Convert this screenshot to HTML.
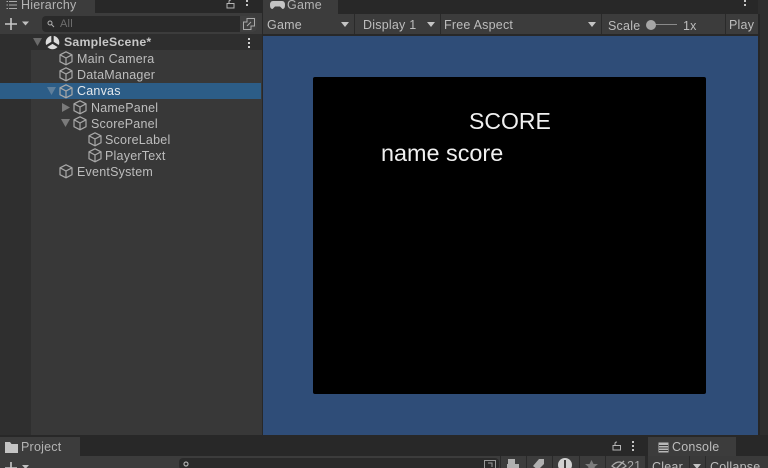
<!DOCTYPE html>
<html><head><meta charset="utf-8">
<style>
html,body{margin:0;padding:0;width:768px;height:468px;overflow:hidden;background:#232323}
body{position:relative;font-family:"Liberation Sans",sans-serif;color:#c4c4c4;font-size:12.5px;filter:blur(.3px)}
.a{position:absolute}
.t{position:absolute;white-space:nowrap;line-height:16px;letter-spacing:.22px;color:#bdbdbd}
svg{position:absolute;overflow:visible}
</style></head><body>
<svg width="0" height="0" style="position:absolute"><defs>
<g id="cube" fill="none" stroke="#a8a8a8" stroke-width="1.200" stroke-linejoin="round"><path d="M7 .8 L13 3.800 V10.700 L7 13.800 L1 10.700 V3.800 Z"/><path d="M1 3.800 L7 7 L13 3.800 M7 7 V13.800"/></g>
</defs></svg>

<!-- Hierarchy panel -->
<div class="a" style="left:0;top:0;width:262px;height:435px;background:#383838"></div>
<div class="a" style="left:0;top:35px;width:31px;height:400px;background:#2f2f2f"></div>
<div class="a" style="left:0;top:0;width:262px;height:13px;background:#282828"></div>
<div class="a" style="left:0;top:0;width:95px;height:13px;background:#3c3c3c"></div>
<svg style="left:6px;top:0" width="12" height="12"><path d="M3 1.500H11M3 5H11M3 8.500H11" stroke="#aaa" stroke-width="1"/><path d="M0.5 1.500H2M0.500 5H2M0.500 8.500H2" stroke="#aaa"/></svg>
<div class="t" style="left:21px;top:-3px;color:#b4b4b4">Hierarchy</div>
<svg style="left:226px;top:0" width="10" height="10"><path d="M1 3.500H8V8H1Z M3 3.500V1.500Q3 0 5 0" fill="none" stroke="#b5b5b5" stroke-width="1"/></svg>
<div class="a" style="left:246px;top:0;width:2px;height:2px;background:#c4c4c4;box-shadow:0 4px #c4c4c4"></div>
<div class="a" style="left:0;top:13px;width:262px;height:21px;background:#3c3c3c"></div>
<svg style="left:5px;top:17px" width="24" height="14"><path d="M6 1V13M0 7H12" stroke="#c8c8c8" stroke-width="1.600"/><path d="M17 4.500H24L20.500 8.500Z" fill="#c0c0c0"/></svg>
<div class="a" style="left:42px;top:16px;width:215px;height:16px;background:#2a2a2a;border-radius:4px"></div>
<div class="a" style="left:240px;top:16px;width:17px;height:16px;background:#404040;border-radius:0 4px 4px 0"></div>
<svg style="left:47px;top:20px" width="9" height="9"><circle cx="3" cy="3" r="2" fill="none" stroke="#b0b0b0" stroke-width="1"/><path d="M4.500 4.500L7 7" stroke="#b0b0b0"/></svg>
<div class="t" style="left:60px;top:16px;font-size:11px;color:#6f6f6f">All</div>
<svg style="left:243px;top:18px" width="12" height="12"><path d="M4 .5H11.500V8H8V11.500H.5V4H4Z" fill="none" stroke="#aaa"/><path d="M4 8L8 4" stroke="#aaa"/></svg>

<div class="a" style="left:0;top:34px;width:262px;height:16px;background:#2e2e2e"></div>
<svg style="left:33px;top:38px" width="9" height="8"><path d="M0 0H9L4.500 8Z" fill="#6a6a6a"/></svg>
<svg style="left:45px;top:35px" width="15" height="15"><circle cx="7.500" cy="7.500" r="6.800" fill="#dcdcdc"/><path d="M7.500 0V7.500M7.500 7.500L1 11.500M7.500 7.500L14 11.500" stroke="#2e2e2e" stroke-width="2.400"/></svg>
<div class="t" style="left:64px;top:34px;font-weight:bold;font-size:12.300px;color:#c6c6c6">SampleScene*</div>
<div class="a" style="left:248px;top:38px;width:2px;height:2px;background:#d0d0d0;box-shadow:0 4px #d0d0d0,0 8px #d0d0d0"></div>

<div class="a" style="left:0;top:83px;width:261px;height:16px;background:#2c5d87"></div>

<svg style="left:59px;top:51px" width="14" height="15"><use href="#cube"/></svg>
<div class="t" style="left:77px;top:51px">Main Camera</div>
<svg style="left:59px;top:67px" width="14" height="15"><use href="#cube"/></svg>
<div class="t" style="left:77px;top:67px">DataManager</div>
<svg style="left:47px;top:87px" width="9" height="8"><path d="M0 0H9L4.500 8Z" fill="#5f7f9b"/></svg>
<svg style="left:59px;top:84px" width="14" height="15"><use href="#cube"/></svg>
<div class="t" style="left:77px;top:83px;color:#e4e8ec">Canvas</div>
<svg style="left:62px;top:103px" width="8" height="9"><path d="M0 0L8 4.500L0 9Z" fill="#7a7a7a"/></svg>
<svg style="left:73px;top:100px" width="14" height="15"><use href="#cube"/></svg>
<div class="t" style="left:91px;top:99.600px">NamePanel</div>
<svg style="left:61px;top:119px" width="9" height="8"><path d="M0 0H9L4.500 8Z" fill="#7a7a7a"/></svg>
<svg style="left:73px;top:116px" width="14" height="15"><use href="#cube"/></svg>
<div class="t" style="left:91px;top:116px">ScorePanel</div>
<svg style="left:88px;top:132px" width="14" height="15"><use href="#cube"/></svg>
<div class="t" style="left:105px;top:132px">ScoreLabel</div>
<svg style="left:88px;top:148px" width="14" height="15"><use href="#cube"/></svg>
<div class="t" style="left:105px;top:148px">PlayerText</div>
<svg style="left:59px;top:164px" width="14" height="15"><use href="#cube"/></svg>
<div class="t" style="left:77px;top:164px">EventSystem</div>

<!-- Game panel -->
<div class="a" style="left:262px;top:0;width:506px;height:435px;background:#282828"></div>
<div class="a" style="left:263px;top:0;width:75px;height:14px;background:#3c3c3c"></div>
<svg style="left:270px;top:1px" width="15" height="8"><path d="M3 0H12Q15 0 15 4Q15 8 12.500 8L10 5.500H5L2.500 8Q0 8 0 4Q0 0 3 0Z" fill="#c4c4c4"/></svg>
<div class="t" style="left:287px;top:-3px;color:#b4b4b4">Game</div>
<div class="a" style="left:744px;top:0;width:2px;height:2px;background:#c4c4c4;box-shadow:0 4px #c4c4c4"></div>
<div class="a" style="left:263px;top:14px;width:495px;height:20px;background:#3c3c3c"></div>
<div class="a" style="left:354px;top:14px;width:1px;height:20px;background:#2a2a2a"></div>
<div class="a" style="left:440px;top:14px;width:1px;height:20px;background:#2a2a2a"></div>
<div class="a" style="left:601px;top:14px;width:1px;height:20px;background:#2a2a2a"></div>
<div class="a" style="left:725px;top:14px;width:1px;height:20px;background:#2a2a2a"></div>
<div class="t" style="left:267px;top:17px">Game</div>
<svg style="left:341px;top:22px" width="8" height="5"><path d="M0 0H8L4 5Z" fill="#c4c4c4"/></svg>
<div class="t" style="left:363px;top:17px">Display 1</div>
<svg style="left:427px;top:22px" width="8" height="5"><path d="M0 0H8L4 5Z" fill="#c4c4c4"/></svg>
<div class="t" style="left:444px;top:17px">Free Aspect</div>
<svg style="left:588px;top:22px" width="8" height="5"><path d="M0 0H8L4 5Z" fill="#c4c4c4"/></svg>
<div class="t" style="left:608px;top:18px">Scale</div>
<div class="a" style="left:652px;top:24px;width:25px;height:1px;background:#8a8a8a"></div>
<div class="a" style="left:646px;top:20px;width:10px;height:10px;border-radius:50%;background:#a6a6a6"></div>
<div class="t" style="left:683px;top:18px">1x</div>
<div class="t" style="left:729px;top:17px">Play</div>
<div class="a" style="left:758px;top:0;width:10px;height:435px;background:#2e2e2e"></div>
<div class="a" style="left:758px;top:14px;width:2px;height:421px;background:#262626"></div>

<div class="a" style="left:263px;top:36px;width:495px;height:399px;background:#2f4d78"></div>
<div class="a" style="left:313px;top:77px;width:393px;height:317px;background:#000;border-radius:2px"></div>
<div class="a" style="left:469px;top:107px;font-size:23px;line-height:28px;color:#f0f0f0;white-space:nowrap">SCORE</div>
<div class="a" style="left:381px;top:139px;font-size:23.400px;line-height:28px;color:#f0f0f0;white-space:nowrap">name score</div>

<!-- Bottom -->
<div class="a" style="left:0;top:435px;width:768px;height:33px;background:#282828"></div>
<div class="a" style="left:0;top:437px;width:80px;height:19px;background:#3c3c3c"></div>
<svg style="left:5px;top:442px" width="13" height="11"><path d="M0 0H5L6.500 2H13V11H0Z" fill="#c4c4c4"/></svg>
<div class="t" style="left:21px;top:439px;color:#b4b4b4">Project</div>
<svg style="left:612px;top:441px" width="10" height="10"><path d="M1 4.500H8.500V9H1Z M3 4.500V2.500Q3 1 5 1" fill="none" stroke="#b5b5b5" stroke-width="1"/></svg>
<div class="a" style="left:632px;top:441px;width:2px;height:2px;background:#c4c4c4;box-shadow:0 4px #c4c4c4,0 8px #c4c4c4"></div>
<div class="a" style="left:648px;top:437px;width:88px;height:19px;background:#3c3c3c"></div>
<svg style="left:658px;top:442px" width="11" height="11"><rect x=".5" y=".5" width="10" height="10" fill="#b8b8b8"/><path d="M1 3.500H10M1 6H10M1 8.500H10" stroke="#3c3c3c"/></svg>
<div class="t" style="left:672px;top:439px">Console</div>
<div class="a" style="left:0;top:456px;width:648px;height:12px;background:#3c3c3c"></div>
<div class="a" style="left:648px;top:456px;width:120px;height:12px;background:#3a3a3a"></div>
<svg style="left:5px;top:461px" width="26" height="10"><path d="M6 1V13M0 7H12" stroke="#c8c8c8" stroke-width="1.600"/><path d="M17 4H24L20.500 8Z" fill="#c0c0c0"/></svg>
<div class="a" style="left:179px;top:458px;width:320px;height:12px;background:#2a2a2a;border-radius:4px"></div>
<svg style="left:183px;top:461px" width="7" height="7"><circle cx="3" cy="3" r="2" fill="none" stroke="#b0b0b0" stroke-width="1.200"/></svg>
<svg style="left:484px;top:460px" width="12" height="10"><path d="M.5 .5H11.500V12H.5Z" fill="none" stroke="#999"/><path d="M4 3H8V7" fill="none" stroke="#999"/></svg>
<div class="a" style="left:500px;top:456px;width:1px;height:12px;background:#2a2a2a"></div>
<svg style="left:507px;top:459px" width="14" height="10"><path d="M1 0H8V5H12V10H0V5H1Z" fill="#b0b0b0"/></svg>
<div class="a" style="left:526px;top:456px;width:1px;height:12px;background:#2a2a2a"></div>
<svg style="left:532px;top:459px" width="12" height="10"><path d="M7 0H12V5L6 11L1 7Z" fill="#b0b0b0"/></svg>
<div class="a" style="left:552px;top:456px;width:1px;height:12px;background:#2a2a2a"></div>
<div class="a" style="left:558px;top:458px;width:14px;height:14px;border-radius:50%;background:#d0d0d0"></div>
<div class="a" style="left:564px;top:460px;width:2px;height:8px;background:#3c3c3c"></div>
<div class="a" style="left:579px;top:456px;width:1px;height:12px;background:#2a2a2a"></div>
<svg style="left:585px;top:460px" width="13" height="10"><path d="M6.500 0L8.500 4H13L9.500 7L11 12H2L3.500 7L0 4H4.500Z" fill="#7c7c7c"/></svg>
<div class="a" style="left:605px;top:456px;width:1px;height:12px;background:#2a2a2a"></div>
<svg style="left:612px;top:460px" width="15" height="9"><path d="M0 6Q7 -2 14 6Q7 12 0 6Z" fill="none" stroke="#aaa" stroke-width="1.300"/><path d="M3 10L12 1" stroke="#aaa" stroke-width="1.300"/></svg>
<div class="t" style="left:627px;top:458px;color:#a8a8a8">21</div>
<div class="a" style="left:645px;top:456px;width:3px;height:12px;background:#2a2a2a"></div>
<div class="t" style="left:652px;top:459px">Clear</div>
<div class="a" style="left:689px;top:456px;width:1px;height:12px;background:#2a2a2a"></div>
<svg style="left:693px;top:464px" width="8" height="5"><path d="M0 0H8L4 5Z" fill="#c4c4c4"/></svg>
<div class="a" style="left:705px;top:456px;width:1px;height:12px;background:#2a2a2a"></div>
<div class="t" style="left:710px;top:459px">Collapse</div>
</body></html>
